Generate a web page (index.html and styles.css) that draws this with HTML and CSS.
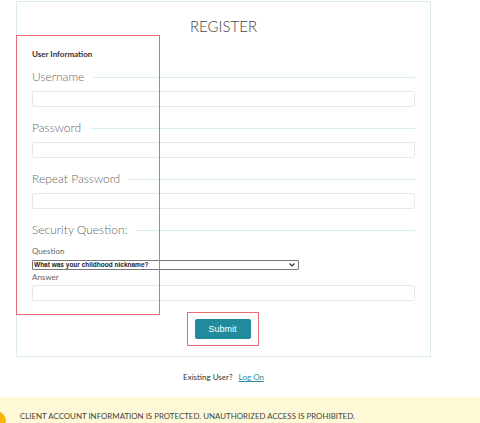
FILE: index.html
```html
<!DOCTYPE html>
<html lang="en">
  <head>
    <meta charset="UTF-8" />
    <title>Register</title>
    <link rel="stylesheet" href="styles.css">
  </head>
  <body>
    <div class="page">
      <div class="card">
        <h2 class="title">REGISTER</h2>
        <div class="mark mark-info"></div>
        <p class="legend">User Information</p>

        <div class="group-head"><span>Username</span><i></i></div>
        <input class="field" type="text" />

        <div class="group-head"><span>Password</span><i></i></div>
        <input class="field" type="password" />

        <div class="group-head"><span>Repeat Password</span><i></i></div>
        <input class="field" type="password" />

        <div class="group-head"><span>Security Question:</span><i></i></div>
        <label class="small-label first">Question</label>
        <select class="question">
          <option>What was your childhood nickname?</option>
          <option>What is the name of your first pet?</option>
          <option>In what city were you born?</option>
        </select>
        <label class="small-label">Answer</label>
        <input class="field" type="text" />

        <div class="actions">
          <span class="mark-submit"><button class="submit">Submit</button></span>
        </div>
      </div>

      <p class="existing">Existing User? <a href="#">Log On</a></p>
    </div>

    <div class="notice">
      <span class="notice-icon"></span>
      <span class="notice-text">CLIENT ACCOUNT INFORMATION IS PROTECTED. UNAUTHORIZED ACCESS IS PROHIBITED.</span>
    </div>
  </body>
</html>
```

FILE: styles.css
```css
body {
  margin: 0;
  font-family: "Lato", "Open Sans", sans-serif;
  color: #555;
  background: #fff;
  overflow: hidden;
}
.page {
  width: 415px;
  margin-left: 16px;
  padding-top: 1px;
}
.card {
  position: relative;
  border: 1px solid #dcedf1;
  padding: 14px 15px 10px;
  background: #fff;
}
.title {
  margin: 0;
  font-size: 15px;
  line-height: 20px;
  font-weight: 300;
  text-align: center;
  color: #444;
}
.mark {
  position: absolute;
  border: 1px solid #e46f72;
}
.mark-info {
  left: -1px;
  top: 33px;
  width: 142px;
  height: 278px;
}
.legend {
  margin: 13px 0 0;
  font-size: 8px;
  line-height: 11px;
  font-weight: 700;
  color: #333;
}
.group-head {
  display: flex;
  align-items: center;
  gap: 9px;
  margin-top: 13px;
  font-size: 12px;
  line-height: 16px;
  font-weight: 300;
  color: #666;
}
.legend + .group-head {
  margin-top: 9px;
}
.group-head i {
  flex: 1;
  height: 1px;
  background: #dbeff3;
}
.field {
  display: block;
  box-sizing: border-box;
  width: 100%;
  height: 16px;
  margin: 6px 0 0;
  border: 1px solid #e6e9ea;
  border-radius: 2px;
  background: #fff;
  padding: 0 4px;
  font-size: 9px;
}
.small-label {
  display: block;
  margin-top: 2px;
  font-size: 8px;
  line-height: 11px;
  color: #666;
}
.small-label.first {
  margin-top: 8px;
}
.question {
  display: block;
  box-sizing: border-box;
  width: 267px;
  height: 10px;
  margin-top: 3px;
  padding: 0 0 0 1px;
  border: 1px solid #777;
  border-radius: 1px;
  font-family: "Liberation Sans", Arial, sans-serif;
  font-size: 6.5px;
  line-height: 8px;
  font-weight: 700;
  color: #222;
  appearance: none;
  background: #fff url("data:image/svg+xml,%3Csvg xmlns='http://www.w3.org/2000/svg' width='6' height='4' viewBox='0 0 6 4'%3E%3Cpath d='M0.5 0.5L3 3L5.5 0.5' fill='none' stroke='%23333' stroke-width='1.2'/%3E%3C/svg%3E") no-repeat right 3px center;
}
.small-label + .field {
  margin-top: 2px;
}
.actions {
  margin-top: 11px;
  text-align: center;
  line-height: 0;
}
.mark-submit {
  display: inline-block;
  margin-left: -2px;
  padding: 6px 7px;
  border: 1px solid #e46f72;
}
.submit {
  width: 56px;
  height: 20px;
  border: 0;
  border-radius: 2px;
  background: #1f8b9c;
  color: #fff;
  font-family: "Liberation Sans", Arial, sans-serif;
  font-size: 9px;
  cursor: pointer;
}
.existing {
  margin: 14px 0 0;
  text-align: center;
  font-size: 8px;
  line-height: 12px;
  color: #333;
}
.existing a {
  margin-left: 4px;
  color: #2a8ea0;
}
.notice {
  display: flex;
  align-items: flex-start;
  gap: 14px;
  margin-top: 14px;
  height: 40px;
  padding-top: 14px;
  box-sizing: border-box;
  background: #fdf9d6;
  overflow: hidden;
}
.notice-icon {
  flex: none;
  width: 20px;
  height: 20px;
  margin-left: -14px;
  border-radius: 50%;
  background: #f6b60d;
}
.notice-text {
  font-size: 7.9px;
  line-height: 10px;
  color: #444;
}
```
